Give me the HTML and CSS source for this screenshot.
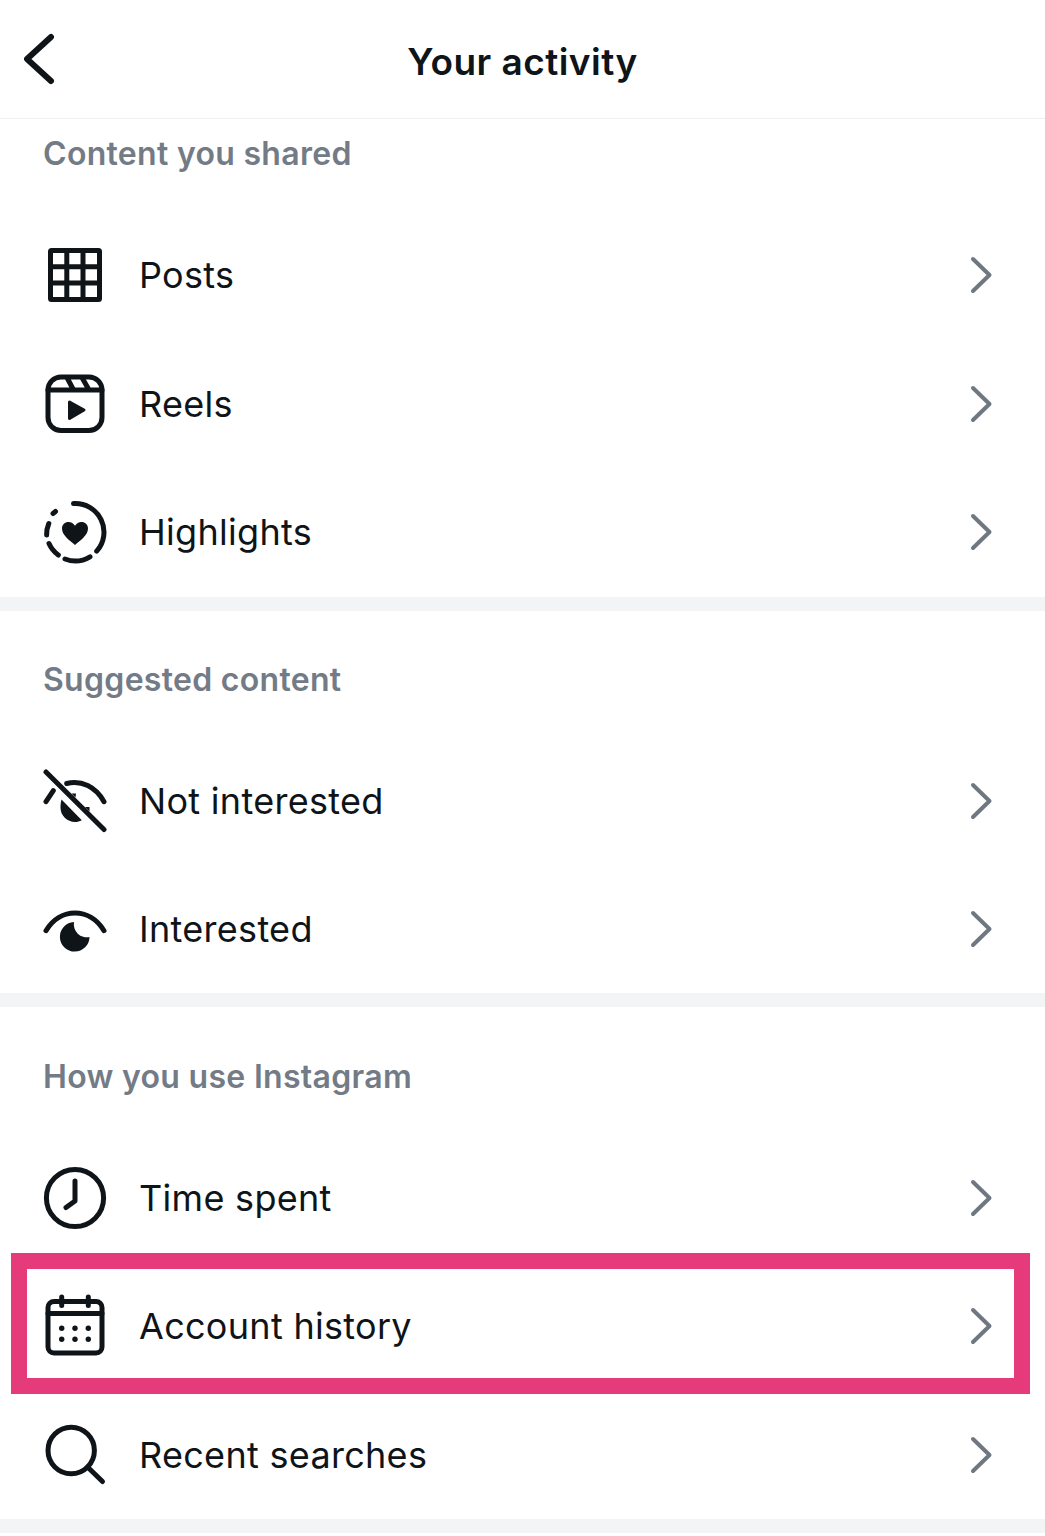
FILE: index.html
```html
<!DOCTYPE html>
<html lang="en">

<head>
  <meta charset="UTF-8">
  <meta name="viewport" content="width=device-width, initial-scale=1.0">
  <title>Your activity</title>
  <link rel="stylesheet" href="styles.css">
</head>

<body>

  <svg class="sprite" width="0" height="0">
    <symbol id="chevron" viewBox="0 0 24 40">
      <path d="M3 4 L19.5 20 L3 36" />
    </symbol>
  </svg>

  <header class="topbar">
    <svg class="back" viewBox="0 0 40 60"><path d="M27 4 L3 26 L27 48" /></svg>
    <h1>Your activity</h1>
  </header>

  <section class="group first">
    <h2>Content you shared</h2>
    <a class="row">
      <svg class="icon" viewBox="0 0 64 64">
        <rect x="7.5" y="7.5" width="49" height="49" rx="1" />
        <path d="M23.8 7.5V56.5M40 7.5V56.5M7.5 23.8H56.5M7.5 40H56.5" />
      </svg>
      <span>Posts</span>
      <svg class="chevron"><use href="#chevron" /></svg>
    </a>
    <a class="row">
      <svg class="icon" viewBox="0 0 64 64">
        <rect x="5" y="5" width="54" height="53.5" rx="13" />
        <path d="M5 18H59M24.5 6.5L30 17M39.5 6.5L45.5 17" />
        <path class="solid" d="M26.5 30 L41 38 L26.5 46.5Z" />
      </svg>
      <span>Reels</span>
      <svg class="chevron"><use href="#chevron" /></svg>
    </a>
    <a class="row">
      <svg class="icon" viewBox="0 0 64 64">
        <path d="M30.5 3.6 A28.6 28.6 0 0 1 53.7 51.2" />
        <path d="M47 56.8 A28.6 28.6 0 0 1 22 59" />
        <path d="M15.3 55 A28.6 28.6 0 0 1 6 43.5" />
        <path d="M3.6 35 A28.6 28.6 0 0 1 5.8 23.5" />
        <path d="M10 13.5 L12.5 11.5" />
        <path class="heart" d="M32 45 C27 40.5 19 35.5 19 28.5 C19 24.5 22 22 25.5 22 C28.2 22 30.5 23.3 32 25.8 C33.5 23.3 35.8 22 38.5 22 C42 22 45 24.5 45 28.5 C45 35.5 37 40.5 32 45Z" />
      </svg>
      <span>Highlights</span>
      <svg class="chevron"><use href="#chevron" /></svg>
    </a>
  </section>

  <section class="group compact">
    <h2>Suggested content</h2>
    <a class="row">
      <svg class="icon" viewBox="0 0 64 64">
        <path class="heart" d="M18.5 30.5 L38.8 51.2 C36.5 52.4 34.5 53 32 53 C24 53 17.5 46.5 17.5 38.5 C17.5 35.5 17.8 33 18.5 30.5Z" />
        <path class="heart" d="M28.5 24.5 L32.5 28.5 L33 24.5Z M42 38 L46.5 42.5 L46.5 38Z" />
        <path d="M3 3 L61 60.5" />
        <path d="M3 32.7 L10.3 21.7" />
        <path d="M23.7 14.5 C38 10.5 53 18 61 32.7" />
      </svg>
      <span>Not interested</span>
      <svg class="chevron"><use href="#chevron" /></svg>
    </a>
    <a class="row">
      <svg class="icon" viewBox="0 0 64 64">
        <path d="M3 33.7 C17 10 47 10 61 33.7" />
        <path class="solid-flat" d="M31 25 A14.8 14.8 0 1 0 46.5 40 A13 13 0 0 1 31 25Z" />
      </svg>
      <span>Interested</span>
      <svg class="chevron"><use href="#chevron" /></svg>
    </a>
  </section>

  <section class="group last">
    <h2>How you use Instagram</h2>
    <a class="row">
      <svg class="icon" viewBox="0 0 64 64">
        <circle cx="32" cy="32" r="28.6" />
        <path d="M32 15 V35 L23 41.5" />
      </svg>
      <span>Time spent</span>
      <svg class="chevron"><use href="#chevron" /></svg>
    </a>
    <a class="row highlighted">
      <svg class="icon" viewBox="0 0 64 64">
        <rect x="5" y="7.5" width="54" height="51.5" rx="6" />
        <path d="M5 19.5H59M18.7 3V11.5M45.3 3V11.5" />
        <g class="dots">
          <circle cx="18.7" cy="34.3" r="2.7" />
          <circle cx="32" cy="34.3" r="2.7" />
          <circle cx="45.3" cy="34.3" r="2.7" />
          <circle cx="18.7" cy="45.3" r="2.7" />
          <circle cx="32" cy="45.3" r="2.7" />
          <circle cx="45.3" cy="45.3" r="2.7" />
        </g>
      </svg>
      <span>Account history</span>
      <svg class="chevron"><use href="#chevron" /></svg>
    </a>
    <a class="row">
      <svg class="icon" viewBox="0 0 64 64">
        <circle cx="28.2" cy="27.5" r="23.2" />
        <path d="M44.5 44 L59.5 58.5" />
      </svg>
      <span>Recent searches</span>
      <svg class="chevron"><use href="#chevron" /></svg>
    </a>
  </section>

</body>

</html>
```

FILE: styles.css
```css
* {
  margin: 0;
  padding: 0;
  box-sizing: border-box;
}

body {
  font-family: Inter, "Liberation Sans", sans-serif;
  background-color: #fff;
  color: #0f1419;
  width: 1045px;
  overflow: hidden;
}

.sprite {
  position: absolute;
}

.topbar {
  height: 119px;
  display: flex;
  align-items: center;
  justify-content: center;
  position: relative;
  border-bottom: 1px solid #eff0f1;
}

.topbar h1 {
  font-size: 37px;
  font-weight: 600;
  letter-spacing: 0.45px;
  line-height: 44px;
  margin-top: 5px;
}

.back {
  position: absolute;
  left: 24px;
  top: 33px;
  width: 40px;
  height: 60px;
  fill: none;
  stroke: #0f1419;
  stroke-width: 6;
  stroke-linecap: round;
  stroke-linejoin: round;
}

.group {
  border-bottom: 14px solid #f3f4f6;
  padding-top: 49px;
}

.group.first {
  padding-top: 15px;
}

.group.last {
  padding-top: 50px;
}

.group h2 {
  font-size: 32px;
  font-weight: 600;
  letter-spacing: 0.3px;
  line-height: 40px;
  color: #737b86;
  padding-left: 43px;
  margin-bottom: 37px;
}

.row {
  height: 128.5px;
  display: flex;
  align-items: center;
  gap: 33px;
  padding: 0 51px 0 43px;
  font-size: 36px;
  letter-spacing: 0.3px;
  position: relative;
}

.group.compact .row {
  height: 128px;
}

.row span {
  flex-grow: 1;
  margin-left: -1px;
}

.icon {
  width: 64px;
  height: 64px;
  flex-shrink: 0;
  fill: none;
  stroke: #0f1419;
  stroke-width: 5;
  stroke-linecap: round;
  stroke-linejoin: round;
}

.icon .solid {
  fill: #0f1419;
  stroke-width: 3;
}

.icon .heart,
.icon .solid-flat,
.icon .dots {
  fill: #0f1419;
  stroke: none;
}

.chevron {
  width: 24px;
  height: 40px;
  fill: none;
  stroke: #6f7781;
  stroke-width: 4;
  stroke-linecap: round;
  stroke-linejoin: round;
}

.highlighted::after {
  content: "";
  position: absolute;
  left: 11px;
  right: 15px;
  top: -9px;
  bottom: -3.5px;
  border: 16px solid #e63b7a;
}
```
